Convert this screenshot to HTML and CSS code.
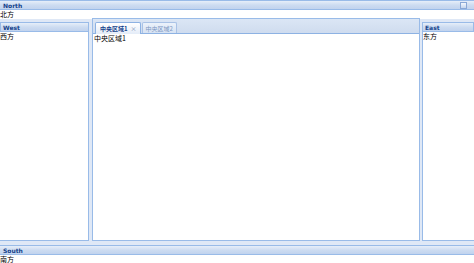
FILE: index.html
```html
<!DOCTYPE html>
<html lang="zh">
<head>
  <meta charset="UTF-8" />
  <title>Border Layout</title>
  <link rel="stylesheet" href="styles.css">
</head>
<body>
  <div class="viewport">
    <div class="panel north">
      <div class="panel-header">
        <span class="panel-title">North</span>
        <span class="tool"></span>
      </div>
      <div class="panel-body">北方</div>
    </div>

    <div class="middle">
      <div class="panel west">
        <div class="panel-header"><span class="panel-title">West</span></div>
        <div class="panel-body">西方</div>
      </div>

      <div class="panel center">
        <div class="tab-strip">
          <div class="tab active">中央区域1<span class="tab-close">×</span></div>
          <div class="tab">中央区域2</div>
        </div>
        <div class="panel-body">中央区域1</div>
      </div>

      <div class="panel east">
        <div class="panel-header"><span class="panel-title">East</span></div>
        <div class="panel-body">东方</div>
      </div>
    </div>

    <div class="panel south">
      <div class="panel-header"><span class="panel-title">South</span></div>
      <div class="panel-body">南方</div>
    </div>
  </div>
</body>
</html>
```

FILE: styles.css
```css
html, body {
  margin: 0;
  padding: 0;
  height: 100%;
}
body {
  background: #dfe8f6;
  font-family: "DejaVu Sans", "Noto Sans CJK SC", sans-serif;
  font-size: 7px;
  color: #000;
}
.viewport {
  display: flex;
  flex-direction: column;
  height: 263px;
  gap: 2px;
}
.panel {
  display: flex;
  flex-direction: column;
}
.panel-header {
  height: 8px;
  display: flex;
  align-items: center;
  justify-content: space-between;
  padding: 0 4px;
  border: 1px solid #99bbe8;
  background: linear-gradient(to bottom, #e6eef9, #cddcf1 50%, #c1d3ee);
}
.panel-title {
  color: #15428b;
  font-weight: bold;
  font-size: 6px;
  font-family: "DejaVu Sans", sans-serif;
}
.panel-body {
  background: #fff;
  line-height: 9px;
  font-size: 7px;
  font-family: "Noto Sans CJK SC", sans-serif;
  white-space: nowrap;
  overflow: hidden;
}
.north .panel-header, .south .panel-header {
  border-left: none;
  border-right: none;
  padding-left: 3px;
}
.north .panel-body {
  height: 9px;
}
.south .panel-body {
  height: 8px;
}
.tool {
  width: 5px;
  height: 5px;
  border: 1px solid #8aa8d6;
  background: linear-gradient(to bottom, #f4f8fd, #c5d6ee);
  margin-right: 3px;
}
.middle {
  flex: 1;
  display: flex;
  gap: 3px;
  padding-top: 1px;
  padding-bottom: 2px;
}
.west {
  width: 89px;
}
.center {
  flex: 1;
  border: 1px solid #99bbe8;
  background: #fff;
  margin-top: -4px;
}
.east {
  width: 52px;
  margin-left: -1px;
}
.west, .east {
  border-bottom: 1px solid #99bbe8;
}
.west .panel-header, .east .panel-header {
  padding-left: 2px;
}
.west .panel-body, .east .panel-body {
  flex: 1;
  border-left: 1px solid #99bbe8;
  border-right: 1px solid #99bbe8;
}
.west .panel-body {
  border-left: none;
}
.east .panel-body {
  border-right: none;
}
.tab-strip {
  height: 14px;
  display: flex;
  align-items: flex-end;
  gap: 1px;
  padding-left: 2px;
  background: linear-gradient(to bottom, #dbe6f5, #cfdcef);
  border-bottom: 1px solid #8db2e3;
}
.tab {
  height: 10px;
  display: flex;
  align-items: center;
  padding: 0 3px;
  font-family: "Noto Sans CJK SC", sans-serif;
  font-size: 6px;
  color: #7c97c2;
  border: 1px solid #a9c2e6;
  border-bottom: none;
  border-radius: 2px 2px 0 0;
  background: linear-gradient(to bottom, #ecf2fb, #d6e2f3);
}
.tab.active {
  height: 11px;
  margin-bottom: -1px;
  color: #15428b;
  font-weight: bold;
  border-color: #8db2e3;
  background: linear-gradient(to bottom, #ffffff, #e4ecf8);
  padding-left: 4px;
}
.tab-close {
  margin-left: 3px;
  font-size: 6px;
  color: #7a8fb5;
  font-weight: normal;
}
.center .panel-body {
  flex: 1;
  padding-left: 1px;
}
```
